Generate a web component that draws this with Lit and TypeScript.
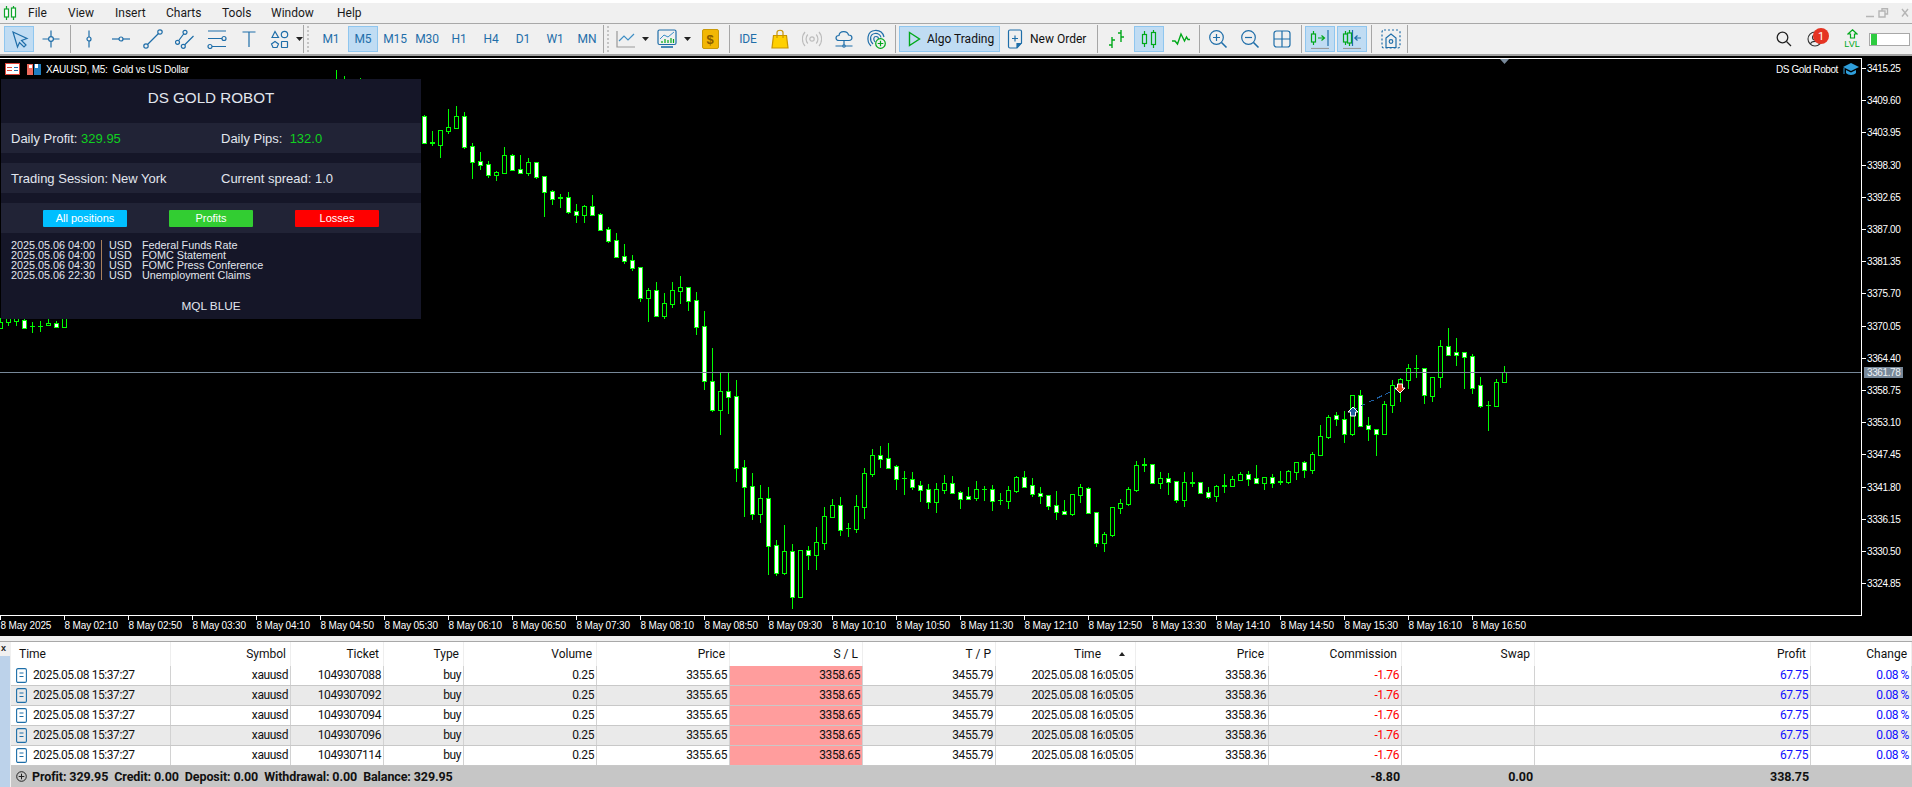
import { LitElement, html, css, svg } from "lit";
import { customElement } from "lit/decorators.js";

type C = [number, number, number, number, number];
// [high, bodyTop, bodyBottom, low, filled] in zoomed-crop units
const A: C[] = [[45,48,128,128,1],[93,126,130,137,0],[90,90,134,173,0],[27,82,92,101,0],[18,48,84,87,0],[37,48,140,146,1],[129,139,185,236,1],[156,184,194,209,1],[183,193,224,233,1],[213,217,224,242,0],[141,166,218,218,0],[163,166,209,209,1],[165,208,218,221,1],[175,187,218,227,0],[187,187,230,236,1],[229,229,275,350,1],[270,274,297,314,1],[282,292,296,323,2],[276,292,335,341,1],[312,334,344,368,1],[316,319,344,368,0],[285,319,344,344,1],[340,343,389,392,1],[381,388,422,428,1],[399,421,470,473,1],[432,469,482,491,1],[465,481,503,512,1],[502,502,593,605,1],[565,571,593,665,0],[546,571,647,647,1],[579,610,647,656,0],[546,571,611,623,0],[528,562,572,611,0],[562,562,602,632,1],[576,601,680,704,1],[633,679,842,869,1]];
const B: C[] = [[-96,4,91,97,1],[-24,34,91,165,0],[-24,33,50,101,1],[0,49,263,305,1],[240,262,320,410,1],[280,319,401,420,1],[316,355,403,429,0],[321,355,497,585,1],[480,496,578,587,1],[435,514,578,585,0],[492,514,650,687,1],[511,511,650,653,0],[498,511,524,570,1],[441,487,524,570,0],[380,409,488,510,0],[357,376,410,414,0],[351,376,449,468,1],[429,445,448,471,2],[346,379,446,459,0],[264,280,380,417,0],[207,226,281,291,0],[197,226,236,264,1],[189,235,263,266,1],[256,259,296,330,1],[273,295,298,345,2],[276,298,320,330,1],[303,316,329,366,1],[312,328,365,387,1],[309,328,365,399,0],[286,310,329,342,0],[288,310,338,338,1],[334,337,356,387,1],[321,349,356,356,1],[303,328,353,363,0],[318,327,329,363,2],[315,328,362,393,1],[339,360,362,375,2],[318,331,362,387,0],[288,292,332,339,0],[273,292,320,324,1],[294,316,341,351,1],[321,340,347,372,1],[346,346,377,390,1],[333,376,395,420,1],[360,394,401,405,1],[343,343,401,408,0],[312,322,344,370,0],[321,325,398,398,1],[397,397,488,501,1],[456,463,488,516,0],[382,382,465,471,0],[358,370,383,402,0],[321,328,371,378,0],[243,256,329,336,0],[234,253,257,276,2],[253,253,308,308,1],[276,295,308,327,0],[279,295,305,345,1],[304,304,359,369,1],[277,307,359,381,0],[276,307,311,321,2],[306,306,338,338,1]];
const D11: C[] = [[201,217,230,237,1],[195,199,228,246,0],[162,196,200,219,2],[168,178,198,201,0],[156,163,179,183,0],[153,163,177,198,1],[135,175,188,191,1],[172,172,188,210,0],[162,172,188,204,1],[153,184,188,195,2],[150,154,186,192,0],[127,127,155,180,0],[123,127,149,174,1],[96,102,149,162,0]];
const D8: C[] = [[375,408,464,464,0],[345,352,410,416,0],[336,346,358,378,1],[334,358,401,429,1],[286,286,401,407,0],[270,286,377,377,1],[351,376,386,423,1],[386,386,401,468,1],[304,313,401,401,0],[240,256,314,339,0],[235,238,262,305,0],[192,205,239,268,0],[165,205,205,234,2],[205,205,286,312,1],[232,232,287,306,0],[120,139,232,264,0],[84,139,164,167,1],[114,157,164,198,1],[157,157,170,267,1],[162,169,263,282,1],[232,256,317,323,1],[303,316,316,392,2],[238,247,317,320,0],[198,217,245,245,0]];

interface Candle { x: number; hi: number; top: number; bot: number; lo: number; kind: number }
function buildCandles(): Candle[] {
  const out: Candle[] = [];
  const add = (rows: C[], base: number) => rows.forEach((r) => {
    const x = 424 + out.length * 8;
    out.push({ x, hi: base + r[0] / 3, top: base + r[1] / 3, bot: base + r[2] / 3, lo: base + r[3] / 3, kind: r[4] });
  });
  add(A, 100); add(B, 380); add(D11, 420); add(D8, 300);
  const extra: Candle[] = [
    { x: 0, hi: 318, top: 322, bot: 328, lo: 328, kind: 0 },
    { x: 8, hi: 300, top: 300, bot: 322, lo: 326, kind: 0 },
    { x: 16, hi: 300, top: 300, bot: 321, lo: 326, kind: 0 },
    { x: 24, hi: 319, top: 320, bot: 328, lo: 329, kind: 1 },
    { x: 32, hi: 322, top: 326, bot: 327, lo: 333, kind: 2 },
    { x: 40, hi: 321, top: 326, bot: 327, lo: 332, kind: 2 },
    { x: 48, hi: 319, top: 323, bot: 325, lo: 325, kind: 0 },
    { x: 56, hi: 321, top: 323, bot: 327, lo: 328, kind: 1 },
    { x: 64, hi: 300, top: 300, bot: 327, lo: 327, kind: 0 },
    { x: 336, hi: 70, top: 90, bot: 100, lo: 100, kind: 0 },
    { x: 344, hi: 76, top: 90, bot: 100, lo: 100, kind: 0 },
    { x: 360, hi: 78, top: 90, bot: 100, lo: 100, kind: 0 },
  ];
  return [...extra, ...out];
}
const candles = buildCandles();
const times = ["8 May 2025","8 May 02:10","8 May 02:50","8 May 03:30","8 May 04:10","8 May 04:50","8 May 05:30","8 May 06:10","8 May 06:50","8 May 07:30","8 May 08:10","8 May 08:50","8 May 09:30","8 May 10:10","8 May 10:50","8 May 11:30","8 May 12:10","8 May 12:50","8 May 13:30","8 May 14:10","8 May 14:50","8 May 15:30","8 May 16:10","8 May 16:50"];
const prices = ["3415.25","3409.60","3403.95","3398.30","3392.65","3387.00","3381.35","3375.70","3370.05","3364.40","3358.75","3353.10","3347.45","3341.80","3336.15","3330.50","3324.85"];
const tickets = ["1049307088","1049307092","1049307094","1049307096","1049307114"];
const news = [
  ["2025.05.06 04:00","USD","Federal Funds Rate"],
  ["2025.05.06 04:00","USD","FOMC Statement"],
  ["2025.05.06 04:30","USD","FOMC Press Conference"],
  ["2025.05.06 22:30","USD","Unemployment Claims"],
];

const B_ = "#1f6ea9";
const G_ = "#00a81a";
const s = (inner: unknown, w = 20, h = 20) => svg`<svg xmlns="http://www.w3.org/2000/svg" width=${w} height=${h} viewBox="0 0 ${w} ${h}" fill="none" stroke=${B_} stroke-width="1.2">${inner}</svg>`;
const candleG = (x: number, t: number, b: number, hi: number, lo: number) => svg`<path d="M${x} ${hi}V${t}M${x} ${b}V${lo}" stroke=${G_}/><rect x=${x - 2} y=${t} width="4" height=${b - t} stroke=${G_}/>`;
const icons: Record<string, unknown> = {
  arrow: s(svg`<path d="M4 3L18 9.5L12.5 11.5L17 16L15 18L10.5 13.5L8.5 18Z"/>`),
  cross: s(svg`<path d="M10 1.5V18.5M1.5 10H18.5"/><circle cx="10" cy="10" r="2.4" fill="#f0f0f0"/>`),
  vline: s(svg`<path d="M10 1.5V18.5"/><circle cx="10" cy="10" r="2" fill="#f0f0f0"/>`),
  hline: s(svg`<path d="M1 10H19"/><circle cx="10" cy="10" r="2" fill="#f0f0f0"/>`),
  trend: s(svg`<path d="M4 16L16 4"/><circle cx="3" cy="17" r="2.2" fill="#f0f0f0"/><circle cx="17" cy="3" r="2.2" fill="#f0f0f0"/>`),
  parallel: s(svg`<path d="M3 12.5L9 4.5M9.5 16L18.5 7"/><circle cx="2.5" cy="13.3" r="2" fill="#f0f0f0"/><circle cx="10" cy="3.3" r="2" fill="#f0f0f0"/><circle cx="8.3" cy="17.3" r="2" fill="#f0f0f0"/>`),
  fib: s(svg`<path d="M1 2H19M1 9.5H15M5 17.5H19"/><circle cx="17" cy="9.5" r="2" fill="#f0f0f0"/><circle cx="3" cy="17.5" r="2" fill="#f0f0f0"/>`),
  text: s(svg`<path d="M3.5 3H16.5M10 3V18"/>`),
  shapes: s(svg`<path d="M2 8.5L5 2.5L8.5 8.5Z"/><circle cx="14.5" cy="5.5" r="3.2"/><path d="M5 12.5L8.5 15L7 18.5H3L1.5 15Z"/><rect x="11.5" y="12.5" width="6" height="6" rx=".5"/>`),
  caret: svg`<svg xmlns="http://www.w3.org/2000/svg" width="7" height="4" viewBox="0 0 7 4"><path d="M0 0H7L3.5 4Z" fill="#222"/></svg>`,
  linechart: s(svg`<path d="M1 2V18H19" stroke="#999"/><path d="M3 12L8 7L12 11L18 5" stroke="#3f8fc5"/>`),
  monitor: s(svg`<rect x="1" y="1" width="18" height="14.5" rx="1.5"/><path d="M3 10L7 6L11 8L17 3" stroke="#3a8fc8" stroke-width="1"/><path d="M5 14V12M8 14V10M11 14V11M14 14V9M16.5 14V10" stroke=${G_} stroke-width="1.2"/><path d="M4 18H16" stroke-width="1.6"/>`),
  bag: s(svg`<path d="M3.5 6.5H16.5L18 19H2Z" fill="#ffd000" stroke="#c99500"/><path d="M7 9V3.5C7 0.5 13 0.5 13 3.5V9" stroke="#c99500"/>`),
  signal: s(svg`<circle cx="10" cy="10" r="2.2" stroke="#bdbdbd"/><path d="M5.8 5.5C3.5 8 3.5 12 5.8 14.5M14.2 5.5C16.5 8 16.5 12 14.2 14.5M3 3C-.5 7 -.5 13 3 17M17 3C20.5 7 20.5 13 17 17" stroke="#bdbdbd"/>`),
  cloud: s(svg`<path d="M5 11.5C1 11.5 1 6.5 5 6.5C5.5 1.5 13.5 1.5 14.5 6C19 6 19 11.5 15 11.5Z"/><path d="M10 11.5V17M1.5 17H18.5"/><circle cx="10" cy="17" r="1.2" fill="#f0f0f0"/>`),
  finger: s(svg`<path d="M5 17C0 12 1 2 9 1.5C14 1.2 17 4 18 8M7 15C3 11 4 5 9 4.5C12 4.2 14.5 6 15 8.5M9 13C7 10.5 7.5 7.5 10 7.5C11.5 7.5 12.5 8.5 12.5 10"/><circle cx="14.5" cy="14.5" r="4.8" fill="#f0f0f0" stroke=${G_}/><path d="M14.5 11.7V17.3M11.7 14.5H17.3" stroke=${G_}/>`),
  play: s(svg`<path d="M5.5 3.5L15.5 10L5.5 16.5Z" stroke=${G_} stroke-width="1.4"/>`),
  doc: s(svg`<path d="M4 1H14C15 1 15.5 1.5 15.5 2.5V14L11 19H4C3 19 2.5 18.5 2.5 17.5V2.5C2.5 1.5 3 1 4 1Z"/><path d="M9 6.5V12.5M6 9.5H12"/><path d="M11 19V14.5H15.5" fill=${B_}/>`),
  bars: s(svg`<path d="M5 8V19M2 16H5M5 11H8M14 1V13M11 4H14M14 8H17" stroke=${G_} stroke-width="1.4"/>`),
  candles: s(svg`${candleG(5.5, 5.5, 14.5, 2, 18)}${candleG(14.5, 3.5, 15.5, 1, 19)}`),
  line: s(svg`<path d="M1 12H4L6.5 15L10 5L13.5 12L15.5 8L17 10.5H19" stroke=${G_} stroke-width="1.4"/>`),
  zoomin: s(svg`<circle cx="8.5" cy="8.5" r="6.8"/><path d="M13.5 13.5L18.5 18.5" stroke-width="1.6"/><path d="M8.5 5V12M5 8.5H12"/>`),
  zoomout: s(svg`<circle cx="8.5" cy="8.5" r="6.8"/><path d="M13.5 13.5L18.5 18.5" stroke-width="1.6"/><path d="M5 8.5H12"/>`),
  grid: s(svg`<rect x="2" y="2" width="16" height="16" rx="2.5"/><path d="M10 2V18M2 10H18"/>`),
  scroll: s(svg`${candleG(3.5, 5, 13, 2, 16)}<path d="M8 9H14M11.5 6.5L14.5 9L11.5 11.5" stroke=${G_}/><path d="M18 1V17"/><path d="M1 19.5H19" stroke="#9a9a9a"/>`),
  shift: s(svg`${candleG(3.5, 5, 13, 2, 16)}${candleG(7.5, 4, 14, 1, 17)}<path d="M10.5 1V17"/><path d="M13 9H19M15.5 6.5L12.8 9L15.5 11.5"/><path d="M1 19.5H19" stroke="#9a9a9a"/>`),
  camera: s(svg`<rect x="1" y="1" width="18" height="18" rx="2" stroke-dasharray="2 2"/><path d="M5 9L10 5L15 9V18.5H5Z" fill="#f0f0f0"/><circle cx="10" cy="12.5" r="1.8"/>`),
  search: svg`<svg xmlns="http://www.w3.org/2000/svg" width="16" height="16" viewBox="0 0 16 16" fill="none" stroke="#222" stroke-width="1.3"><circle cx="6.5" cy="6.5" r="5.3"/><path d="M10.5 10.5L15 15"/></svg>`,
  logo: svg`<svg xmlns="http://www.w3.org/2000/svg" width="14" height="14" viewBox="0 0 14 14" fill="none" stroke="#0fa52b" stroke-width="1.2"><path d="M3.5 0V14M10.5 0V14"/><rect x="1.5" y="3" width="4" height="8" fill="#fff"/><rect x="8.5" y="2" width="4" height="9" fill="#fff"/></svg>`,
  user: svg`<svg xmlns="http://www.w3.org/2000/svg" width="16" height="16" viewBox="0 0 16 16" fill="none" stroke="#333" stroke-width="1.1"><circle cx="8" cy="8" r="7"/><circle cx="8" cy="6.5" r="2.5"/><path d="M3.5 13C4.5 9.5 11.5 9.5 12.5 13"/></svg>`,
  lvlup: svg`<svg xmlns="http://www.w3.org/2000/svg" width="11" height="10" viewBox="0 0 11 10" fill="none" stroke=${G_} stroke-width="1.2"><path d="M5.5 .8L10 5H7.5V9H3.5V5H1Z"/></svg>`,
  sheet: svg`<svg xmlns="http://www.w3.org/2000/svg" width="11" height="15" viewBox="0 0 11 15" fill="none" stroke="#1d6ea8" stroke-width="1.1"><rect x=".6" y=".6" width="9.8" height="13.8" rx="1.4"/><path d="M3.5 5H7.5M3.5 8.5H7.5"/></svg>`,
  plusc: svg`<svg xmlns="http://www.w3.org/2000/svg" width="11" height="11" viewBox="0 0 11 11" fill="none" stroke="#222" stroke-width="1"><circle cx="5.5" cy="5.5" r="4.8"/><path d="M5.5 2.7V8.3M2.7 5.5H8.3"/></svg>`,
  win: svg`<svg xmlns="http://www.w3.org/2000/svg" width="44" height="10" viewBox="0 0 44 10" fill="none" stroke="#b5b5b5" stroke-width="1.4"><path d="M0 8.5H8M13 3H19V9H13ZM16 3V.8H21.5V6H19M36 1L42 8.5M42 1L36 8.5"/></svg>`,
};

@customElement("app-root")
export class AppRoot extends LitElement {
  static styles = css`
    :host { display: block; width: 1912px; height: 787px; overflow: hidden; background: #f0f0f0; font-family: Roboto, "Liberation Sans", sans-serif; font-size: 12px; color: #111; }
    .top { height: 3px; background: #fff; }
    .menu { height: 20px; display: flex; align-items: center; border-bottom: 1px solid #a8a8a8; padding-left: 3px; position: relative; }
    .logo { width: 25px; display: flex; }
    .mi { color: #1a1a1a; }
    .mi-file { width: 40px; } .mi-view { width: 47px; } .mi-insert { width: 51px; } .mi-charts { width: 56px; } .mi-tools { width: 49px; } .mi-window { width: 66px; }
    .winbtns { margin-left: auto; margin-right: 2px; display: flex; }
    .tb { height: 30px; display: flex; align-items: center; padding-left: 3px; border-bottom: 2px solid #a4a4a4; }
    .b { width: 32px; height: 26px; display: flex; align-items: center; justify-content: center; flex: none; box-sizing: border-box; border: 1px solid transparent; position: relative; }
    .b.inset { width: 30px; margin: 0 1px; }
    .b.on { background: #c0dcf3; border-color: #8fc6ef; }
    .b.w30 { width: 30px; }
    .caret { width: 8px; height: 26px; display: flex; align-items: center; justify-content: center; flex: none; }
    .p { color: #1f6ea9; font-size: 12px; letter-spacing: -.1px; }
    .sep { flex: none; height: 28px; display: flex; justify-content: center; }
    .sep::before { content: ""; width: 1px; height: 100%; background: #a6a6a6; }
    .s6 { width: 6px; } .s4 { width: 4px; } .s7 { width: 7px; } .s1 { width: 1px; }
    .grip { flex: none; width: 12px; height: 28px; box-sizing: border-box; border-left: 1px solid #a6a6a6; position: relative; }
    .grip.short { width: 8px; }
    .grip::after { content: ""; position: absolute; left: 3px; top: 1px; bottom: 1px; border-left: 2px dotted #c4c4c4; }
    .sp1 { width: 1px; flex: none; } .sp2 { width: 2px; flex: none; } .sp3 { width: 3px; flex: none; }
    .dollar { width: 17px; height: 20px; background: #f2b705; border: 1px solid #c99a0a; border-radius: 2px; box-sizing: border-box; display: flex; align-items: center; justify-content: center; color: #8a5d00; font: bold 13px "Liberation Sans", sans-serif; }
    .wide { flex: none; height: 26px; display: flex; align-items: center; box-sizing: border-box; border: 1px solid transparent; }
    .algo { width: 101px; margin: 0 1px; padding-left: 4px; gap: 3px; background: #c0dcf3; border-color: #8fc6ef; color: #111; }
    .order { width: 93px; padding-left: 4px; gap: 4px; color: #111; }
    .right { margin-left: auto; display: flex; align-items: center; padding-right: 2px; }
    .badge { position: absolute; left: 12px; top: 1px; width: 16px; height: 16px; border-radius: 50%; background: #e53423; color: #fff; font-size: 11px; display: flex; align-items: center; justify-content: center; }
    .lvl { flex: none; width: 32px; margin-left: 6px; display: flex; flex-direction: column; align-items: center; color: #00a81a; font: 9px/9px "Liberation Sans", sans-serif; gap: 1px; }
    .prog { flex: none; margin-left: 1px; width: 41px; height: 13px; border: 1px solid #a8a8a8; box-sizing: border-box; background: #fff; }
    .prog i { display: block; height: 100%; width: 6px; background: #2ecc40; margin-left: 1px; }
    .chart { height: 580px; background: #000; position: relative; }
    .chart svg { display: block; }
    .panel { position: absolute; left: 1px; top: 23px; width: 420px; height: 240px; background: #151628; color: #e2e6ee; font-family: "Liberation Sans", sans-serif; display: flex; flex-direction: column; }
    .ptitle { height: 36px; padding-bottom: 8px; display: flex; align-items: center; justify-content: center; font-size: 15.2px; }
    .prow { height: 30px; margin-bottom: 10px; background: #212336; display: grid; grid-template-columns: 210px 210px; align-items: center; font-size: 13px; }
    .prow > div { padding-left: 10px; white-space: pre; }
    .gr { color: #10d020; }
    .pbtns { height: 30px; background: #212336; display: flex; align-items: center; justify-content: center; gap: 42px; }
    .pb { width: 84px; height: 17px; border-radius: 1px; display: flex; align-items: center; justify-content: center; color: #fff; font-size: 11px; }
    .pb.all { background: #00bfff; } .pb.pro { background: #32cd32; } .pb.los { background: #ff0000; }
    .news { padding: 7px 0 0 10px; display: grid; grid-template-columns: 90px 8px 33px auto; grid-auto-rows: 10px; width: max-content; font-size: 10.8px; line-height: 10px; position: relative; }
    .news .bar { grid-column: 2; grid-row: 1 / span 4; width: 1px; border-left: 1.5px solid #a9805c; }
    .news .t { grid-column: 1; } .news .u { grid-column: 3; } .news .n { grid-column: 4; }
    .pfoot { margin-top: auto; padding-bottom: 6px; text-align: center; font-size: 11.8px; }
    .gap { height: 5px; background: #f0f0f0; }
    .tablewrap { display: flex; height: 146px; }
    .strip { width: 11px; flex: none; display: flex; flex-direction: column; }
    .strip .x { height: 14px; font: bold 9px/12px "Liberation Sans", sans-serif; padding-left: 1px; color: #222; border-top: 1px solid #a8a8a8; }
    .strip .bl { flex: 1; background: #bcd2ea; width: 10px; }
    .table { flex: 1; display: flex; flex-direction: column; }
    .row { display: grid; grid-template-columns: 160px 120px 93px 80px 133px 133px 133px 133px 140px 133px 133px 133px 276px 1fr; box-sizing: border-box; height: 20px; align-items: stretch; }
    .row > div { display: flex; align-items: center; justify-content: flex-end; padding: 0 2px 1px 0; box-sizing: border-box; border-right: 1px solid #d2d2d2; font-size: 12px; letter-spacing: -.42px; white-space: nowrap; color: #111; }
    .row.head { height: 25px; background: #fff; border-top: 1px solid #a8a8a8; }
    .row.head > div { font-size: 12px; letter-spacing: 0; padding-right: 4px; border-right-color: #eee; }
    .row.body { background: #fff; border-bottom: 1px solid #c8c8c8; }
    .row.body.alt { background: #eaeaea; }
    .row > div.first { justify-content: flex-start; padding-left: 5px; gap: 6px; }
    .row.head > div.head1 { justify-content: flex-start; padding-left: 8px; }
    .row > div.sl { background: #ff9d9d; }
    .row > div.red { color: #ff0000; } .row > div.blue { color: #1010ff; }
    .sort { margin-left: 18px; margin-right: 6px; width: 0; height: 0; border-left: 3.5px solid transparent; border-right: 3.5px solid transparent; border-bottom: 4px solid #222; }
    .row.sum { height: 21px; background: #c6c6c6; }
    .row.sum > div { border: none; font-weight: 700; font-size: 12.5px; letter-spacing: -.1px; }
    .row.sum > div.sumtext { grid-column: 1 / span 6; justify-content: flex-start; padding-left: 5px; gap: 5px; white-space: pre; }
    .ax { font-family: "Liberation Sans", sans-serif; font-size: 10px; fill: #fff; }
    .axp { letter-spacing: -.4px; }
    .axt { letter-spacing: -.15px; }
    .axh { letter-spacing: -.2px; }
    .axr { letter-spacing: -.4px; }
    .axc { letter-spacing: -.4px; fill: #eef1f4; }
  `;

  private chartSvg() {
    const g = "#00ff00";
    return html`<svg xmlns="http://www.w3.org/2000/svg" width="1912" height="580" viewBox="0 56 1912 580" shape-rendering="crispEdges">
      ${candles.map((c) => {
        const t = Math.round(c.top), b = Math.max(Math.round(c.bot), t + 1), hi = Math.round(c.hi), lo = Math.round(c.lo);
        return svg`<rect x=${c.x} y=${hi} width="1" height=${Math.max(lo - hi, 1)} fill=${g}/>
          ${c.kind === 2
            ? svg`<rect x=${c.x - 2} y=${t} width="5" height=${Math.max(b - t, 1)} fill=${g}/>`
            : svg`<rect x=${c.x - 1.5} y=${t + .5} width="4" height=${Math.max(b - t, 1)} fill=${c.kind === 1 ? "#fff" : "#000"} stroke=${g}/>`}`;
      })}
      <rect x="0" y="372" width="1862" height="1" fill="#778899"/>
      <rect x="0" y="58" width="1862" height="1" fill="#fff"/>
      <rect x="1861" y="58" width="1" height="558" fill="#fff"/>
      <rect x="0" y="615" width="1862" height="1" fill="#fff"/>
      <path d="M1500 59H1509L1504.5 64Z" fill="#778899" shape-rendering="auto"/>
      ${times.map((t, i) => svg`<rect x=${i * 64} y="615" width="1" height="5" fill="#fff"/><text class="ax axt" x=${i * 64 + .5} y="629" shape-rendering="auto">${t}</text>`)}
      ${prices.map((p, i) => {
        const y = Math.round(68 + i * 32.2);
        return svg`<rect x="1862" y=${y} width="4" height="1" fill="#fff"/><text class="ax axp" x="1867" y=${y + 4} shape-rendering="auto">${p}</text>`;
      })}
      <rect x="1864" y="367" width="39" height="11" fill="#778899"/>
      <text class="ax axc" x="1867" y="376" shape-rendering="auto">3361.78</text>
      <path d="M1353 410L1400 387" stroke="#1f5fa0" stroke-dasharray="5 4" fill="none"/>
      <g shape-rendering="auto">
        <path d="M1353 407L1358 412H1355.5V416H1350.5V412H1348Z" fill="#1f5f9e" stroke="#fff"/>
        <path d="M1400 393L1405 388H1402.5V384H1397.5V388H1395Z" fill="#e0401f" stroke="#fff"/>
      </g>
      <g>
        <rect x="5.5" y="63.5" width="14" height="11" fill="#fff" stroke="#e0473a"/>
        <path d="M7 67H12M7 70H12" stroke="#e0473a"/><path d="M14 67H18M14 70H18" stroke="#1f6ea9"/>
        <path d="M27 64H33V75H27Z" fill="#ee6a5c"/><path d="M34 64H41V75H34Z" fill="#1f7ec0"/><path d="M35 64H38V68H35ZM29 65H32V68H29Z" fill="#fff"/>
      </g>
      <text class="ax axh" x="46" y="73" shape-rendering="auto" xml:space="preserve">XAUUSD, M5:  Gold vs US Dollar</text>
      <text class="ax axr" x="1838" y="73" text-anchor="end" shape-rendering="auto">DS Gold Robot</text>
      <g shape-rendering="auto"><path d="M1843 67L1851 63L1859 67L1851 71Z" fill="#2f9fdc"/><path d="M1846 70V73C1848 75.5 1854 75.5 1856 73V70L1851 72.5Z" fill="#2f9fdc"/><path d="M1844 68V74" stroke="#2f9fdc"/></g>
    </svg>`;
  }

  private panel() {
    return html`<div class="panel">
      <div class="ptitle">DS GOLD ROBOT</div>
      <div class="prow"><div>Daily Profit: <span class="gr">329.95</span></div><div>Daily Pips:  <span class="gr">132.0</span></div></div>
      <div class="prow"><div>Trading Session: New York</div><div>Current spread: 1.0</div></div>
      <div class="pbtns"><div class="pb all">All positions</div><div class="pb pro">Profits</div><div class="pb los">Losses</div></div>
      <div class="news">
        <div class="bar"></div>
        ${news.map((n) => html`<div class="t">${n[0]}</div><div class="u">${n[1]}</div><div class="n">${n[2]}</div>`)}
      </div>
      <div class="pfoot">MQL BLUE</div>
    </div>`;
  }

  private table() {
    const heads = ["Symbol","Ticket","Type","Volume","Price","S / L","T / P"];
    return html`<div class="tablewrap">
      <div class="strip"><div class="x">x</div><div class="bl"></div></div>
      <div class="table">
        <div class="row head">
          <div class="head1">Time</div>
          ${heads.map((h) => html`<div>${h}</div>`)}
          <div>Time<span class="sort"></span></div>
          <div>Price</div><div>Commission</div><div>Swap</div><div>Profit</div><div>Change</div>
        </div>
        ${tickets.map((t, i) => html`<div class="row body ${i % 2 ? "alt" : ""}">
          <div class="first">${icons.sheet}2025.05.08 15:37:27</div>
          <div>xauusd</div><div>${t}</div><div>buy</div><div>0.25</div><div>3355.65</div>
          <div class="sl">3358.65</div><div>3455.79</div><div>2025.05.08 16:05:05</div><div>3358.36</div>
          <div class="red">-1.76</div><div></div><div class="blue">67.75</div><div class="blue">0.08 %</div>
        </div>`)}
        <div class="row sum">
          <div class="sumtext">${icons.plusc}Profit: 329.95  Credit: 0.00  Deposit: 0.00  Withdrawal: 0.00  Balance: 329.95</div>
          <div></div><div></div><div></div><div></div>
          <div>-8.80</div><div>0.00</div><div>338.75</div><div></div>
        </div>
      </div>
    </div>`;
  }

  render() {
    const b = (n: string) => html`<div class="b">${icons[n]}</div>`;
    const on = (n: string) => html`<div class="b inset on">${icons[n]}</div>`;
    const caret = html`<div class="caret">${icons.caret}</div>`;
    const periods = ["M1","M5","M15","M30","H1","H4","D1","W1","MN"];
    return html`
      <div class="top"></div>
      <div class="menu">
        <div class="logo">${icons.logo}</div>
        <div class="mi mi-file">File</div><div class="mi mi-view">View</div><div class="mi mi-insert">Insert</div><div class="mi mi-charts">Charts</div><div class="mi mi-tools">Tools</div><div class="mi mi-window">Window</div><div class="mi">Help</div>
        <div class="winbtns">${icons.win}</div>
      </div>
      <div class="tb">
        ${on("arrow")}${b("cross")}<div class="sep s6"></div>
        ${b("vline")}${b("hline")}${b("trend")}${b("parallel")}${b("fib")}${b("text")}
        <div class="b w30">${icons.shapes}</div>${caret}
        <div class="grip"></div>
        ${periods.map((p) => p === "M5"
          ? html`<div class="b inset on"><span class="p">${p}</span></div>`
          : html`<div class="b"><span class="p">${p}</span></div>`)}
        <div class="grip short"></div>
        <div class="b w30">${icons.linechart}</div>${caret}<div class="sp2"></div>
        ${b("monitor")}${caret}<div class="sp3"></div>
        <div class="b"><div class="dollar">$</div></div><div class="sep s6"></div>
        <div class="b"><span class="p">IDE</span></div>${b("bag")}${b("signal")}${b("cloud")}${b("finger")}
        <div class="sep s6"></div>
        <div class="wide algo">${icons.play}<span>Algo Trading</span></div>
        <div class="wide order">${icons.doc}<span>New Order</span></div>
        <div class="sep s6"></div><div class="sp1"></div>
        ${b("bars")}${on("candles")}${b("line")}
        <div class="sep s4"></div><div class="sp1"></div>
        ${b("zoomin")}${b("zoomout")}${b("grid")}
        <div class="sep s6"></div>
        ${on("scroll")}${on("shift")}
        <div class="sep s7"></div>
        ${b("camera")}
        <div class="sep s1"></div>
        <div class="right">
          ${b("search")}
          <div class="b w30">${icons.user}<div class="badge">1</div></div>
          <div class="lvl">${icons.lvlup}<span>LVL</span></div>
          <div class="prog"><i></i></div>
        </div>
      </div>
      <div class="chart">${this.chartSvg()}${this.panel()}</div>
      <div class="gap"></div>
      ${this.table()}
    `;
  }
}
